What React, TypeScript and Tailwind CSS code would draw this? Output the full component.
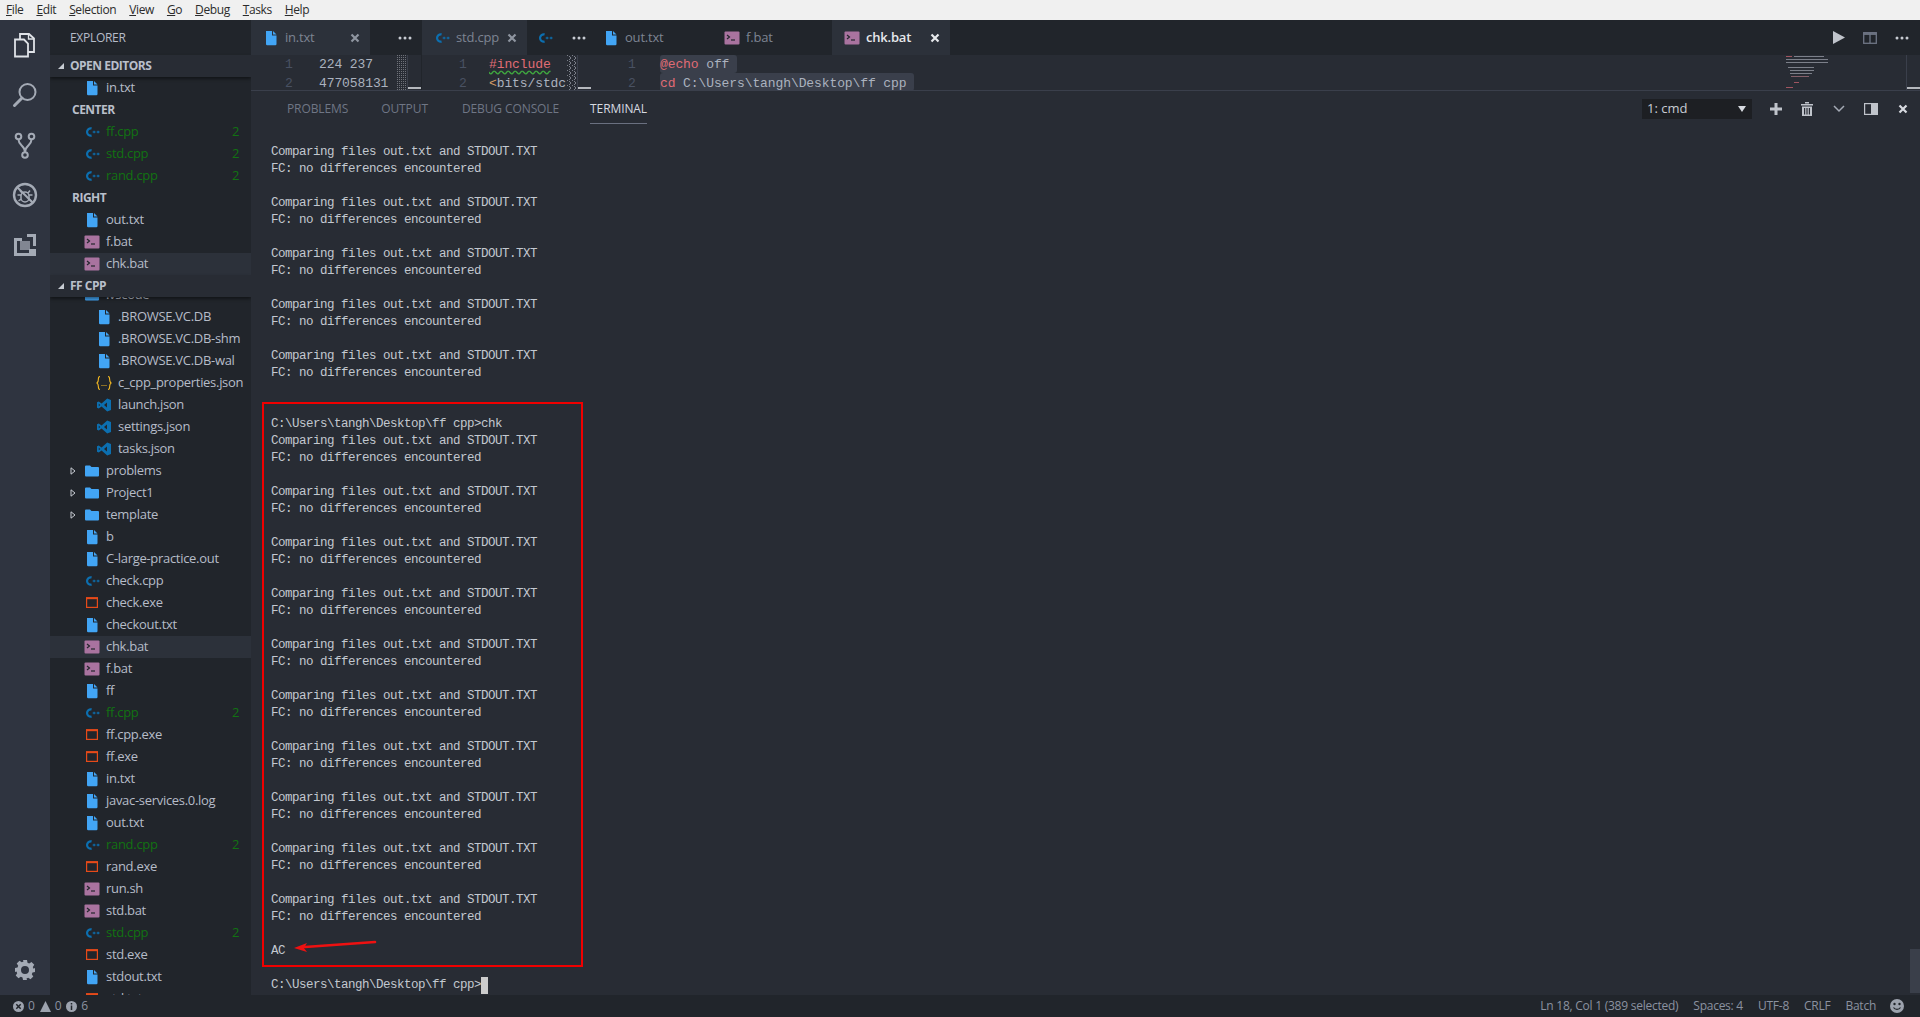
import type { ReactNode } from 'react'

const uiFont = "font-['Open_Sans','Noto_Sans',sans-serif]"
const monoFont = "font-['Liberation_Mono',monospace]"

const FileIcon = () => (
  <svg width="16" height="16" viewBox="0 0 16 16">
    <path d="M3 1h6v4.500h4.500V14a1.200 1.200 0 0 1-1.200 1.200H4.200A1.200 1.200 0 0 1 3 14z" fill="#42a5f5" />
    <path d="M10 1l3.500 3.500H10z" fill="#42a5f5" />
  </svg>
)

const CppIcon = () => (
  <svg width="16" height="16" viewBox="0 0 16 16">
    <path d="M7.600 4.400a3.700 3.700 0 1 0 0 7.200" fill="none" stroke="#0c6fb0" strokeWidth="2.200" />
    <path d="M8.600 8h3M10.100 6.700v2.600M12.600 8h3M14.100 6.700v2.600" stroke="#0c6fb0" strokeWidth="1.200" />
  </svg>
)

const BatIcon = () => (
  <svg width="16" height="16" viewBox="0 0 16 16">
    <rect x="0.500" y="1.500" width="15" height="13" rx="1" fill="#a9739f" />
    <path d="M3 5l2.500 2L3 9" fill="none" stroke="#23262c" strokeWidth="1.200" />
    <path d="M7 10h4" stroke="#23262c" strokeWidth="1.200" />
  </svg>
)

const ExeIcon = () => (
  <svg width="16" height="16" viewBox="0 0 16 16">
    <rect x="2.600" y="3" width="10.800" height="9.400" fill="none" stroke="#e64a19" strokeWidth="1.200" />
    <path d="M2 3.200h12" stroke="#e64a19" strokeWidth="2" />
  </svg>
)

const JsonIcon = () => (
  <svg width="16" height="16" viewBox="0 0 16 16">
    <path d="M4 1.500c-1.600 0-1.600 1-1.600 2.500S2.400 7 1 8c1.400 1 1.400 2.500 1.400 4s0 2.500 1.600 2.500M12 1.500c1.600 0 1.600 1 1.600 2.500s0 3 1.400 4c-1.400 1-1.400 2.500-1.400 4s0 2.500-1.600 2.500" fill="none" stroke="#f5b921" strokeWidth="1.100" />
    <path d="M5.500 10.500h1M7.500 10.500h1M9.500 10.500h1" stroke="#f5b921" strokeWidth="1.200" />
  </svg>
)

const VsIcon = () => (
  <svg width="16" height="16" viewBox="0 0 16 16">
    <path fillRule="evenodd" d="M11.200 1.500L5.600 6.600 2.700 4.400 1 5.300v5.400l1.700.9 2.900-2.200 5.600 5.100 3.800-1.500V3zM11 5.400L8 8l3 2.600zM2.800 6.700L4.200 8 2.800 9.300z" fill="#0c6fb0" />
  </svg>
)

const FolderIcon = () => (
  <svg width="16" height="16" viewBox="0 0 16 16">
    <path d="M1 3.500A1 1 0 0 1 2 2.500h4l1.500 1.500H14a1 1 0 0 1 1 1v7.500a1 1 0 0 1-1 1H2a1 1 0 0 1-1-1z" fill="#42a5f5" />
  </svg>
)

const Dots = () => (
  <svg width="14" height="4" viewBox="0 0 14 4">
    <circle cx="2" cy="2" r="1.500" fill="#c8ccd3" />
    <circle cx="7" cy="2" r="1.500" fill="#c8ccd3" />
    <circle cx="12" cy="2" r="1.500" fill="#c8ccd3" />
  </svg>
)

const CloseIcon = ({ color = '#8f95a0' }: { color?: string }) => (
  <svg width="10" height="10" viewBox="0 0 10 10">
    <path d="M1.500 1.500l7 7M8.500 1.500l-7 7" stroke={color} strokeWidth="2.200" />
  </svg>
)

type Kind = 'file' | 'cpp' | 'bat' | 'exe' | 'json' | 'vs' | 'folder'

const icons: Record<Kind, ReactNode> = {
  file: <FileIcon />,
  cpp: <CppIcon />,
  bat: <BatIcon />,
  exe: <ExeIcon />,
  json: <JsonIcon />,
  vs: <VsIcon />,
  folder: <FolderIcon />,
}

type Row = { name: string; kind: Kind; deep?: boolean; green?: boolean; closed?: boolean; picked?: boolean }

const Item = ({ name, kind, deep, green, closed, picked }: Row) => (
  <div className={`h-[22px] shrink-0 flex items-center relative ${deep ? 'pl-[46px]' : 'pl-[34px]'} ${picked ? 'bg-[#2c313a]' : ''}`}>
    {closed && (
      <svg className="absolute left-[20px] top-[7px]" width="6" height="8" viewBox="0 0 6 8">
        <path d="M1 .8L5 4 1 7.200z" fill="#21252b" stroke="#c8ccd3" strokeWidth="1" />
      </svg>
    )}
    {icons[kind]}
    <span className={`ml-[6px] whitespace-nowrap tracking-[-0.3px] ${green ? 'text-[#127212]' : 'text-[#b6bcc8]'}`}>{name}</span>
    {green && <span className="absolute left-[182px] text-[#127212]">2</span>}
  </div>
)

const SectionHeader = ({ title }: { title: string }) => (
  <div className="h-[22px] shrink-0 relative z-10 flex items-center bg-[#282c34] shadow-[0_2px_3px_rgba(0,0,0,0.45)] pl-[8px] font-bold text-[12px] text-[#b9bfca] tracking-[-0.5px]">
    <svg className="mr-[6px]" width="6" height="6" viewBox="0 0 6 6">
      <path d="M6 0v6H0z" fill="#c8ccd3" />
    </svg>
    {title}
  </div>
)

const GroupLabel = ({ title }: { title: string }) => (
  <div className="h-[22px] shrink-0 flex items-center pl-[22px] font-bold text-[12px] text-[#b9bfca] tracking-[-0.5px]">{title}</div>
)

const openEditors: Row[] = [{ name: 'in.txt', kind: 'file' }]
const centerGroup: Row[] = [
  { name: 'ff.cpp', kind: 'cpp', green: true },
  { name: 'std.cpp', kind: 'cpp', green: true },
  { name: 'rand.cpp', kind: 'cpp', green: true },
]
const rightGroup: Row[] = [
  { name: 'out.txt', kind: 'file' },
  { name: 'f.bat', kind: 'bat' },
  { name: 'chk.bat', kind: 'bat', picked: true },
]
const tree: Row[] = [
  { name: '.vscode', kind: 'folder' },
  { name: '.BROWSE.VC.DB', kind: 'file', deep: true },
  { name: '.BROWSE.VC.DB-shm', kind: 'file', deep: true },
  { name: '.BROWSE.VC.DB-wal', kind: 'file', deep: true },
  { name: 'c_cpp_properties.json', kind: 'json', deep: true },
  { name: 'launch.json', kind: 'vs', deep: true },
  { name: 'settings.json', kind: 'vs', deep: true },
  { name: 'tasks.json', kind: 'vs', deep: true },
  { name: 'problems', kind: 'folder', closed: true },
  { name: 'Project1', kind: 'folder', closed: true },
  { name: 'template', kind: 'folder', closed: true },
  { name: 'b', kind: 'file' },
  { name: 'C-large-practice.out', kind: 'file' },
  { name: 'check.cpp', kind: 'cpp' },
  { name: 'check.exe', kind: 'exe' },
  { name: 'checkout.txt', kind: 'file' },
  { name: 'chk.bat', kind: 'bat', picked: true },
  { name: 'f.bat', kind: 'bat' },
  { name: 'ff', kind: 'file' },
  { name: 'ff.cpp', kind: 'cpp', green: true },
  { name: 'ff.cpp.exe', kind: 'exe' },
  { name: 'ff.exe', kind: 'exe' },
  { name: 'in.txt', kind: 'file' },
  { name: 'javac-services.0.log', kind: 'file' },
  { name: 'out.txt', kind: 'file' },
  { name: 'rand.cpp', kind: 'cpp', green: true },
  { name: 'rand.exe', kind: 'exe' },
  { name: 'run.sh', kind: 'bat' },
  { name: 'std.bat', kind: 'bat' },
  { name: 'std.cpp', kind: 'cpp', green: true },
  { name: 'std.exe', kind: 'exe' },
  { name: 'stdout.txt', kind: 'file' },
  { name: 'std.txt', kind: 'exe' },
]

const menu = ['File', 'Edit', 'Selection', 'View', 'Go', 'Debug', 'Tasks', 'Help']

const ActivityBar = () => (
  <aside className="w-[50px] shrink-0 bg-[#2f3440] flex flex-col items-center pt-[12px]">
    <svg width="24" height="26" viewBox="0 0 24 26" fill="none" stroke="#dfe2e7" strokeWidth="1.800">
      <path d="M2 7.500h9l4 4v13H2z" />
      <path d="M7 7V2h9l5 4.500V20h-6" />
      <path d="M15.500 2.500V7H21" strokeWidth="1.300" />
    </svg>
    <svg className="mt-[24px]" width="26" height="26" viewBox="0 0 26 26" fill="none" stroke="#a4aab5">
      <circle cx="15.500" cy="10" r="8" strokeWidth="2" />
      <path d="M10 16L2.500 23.500" strokeWidth="3" strokeLinecap="round" />
    </svg>
    <svg className="mt-[24px]" width="22" height="28" viewBox="0 0 22 28" fill="none" stroke="#a4aab5" strokeWidth="2">
      <circle cx="4.500" cy="4.500" r="2.800" />
      <circle cx="17.500" cy="4.500" r="2.800" />
      <circle cx="11" cy="23" r="2.800" />
      <path d="M4.500 7.500c0 6 6.500 6 6.500 12.500M17.500 7.500c0 6-6.500 6-6.500 12.500" />
    </svg>
    <svg className="mt-[22px]" width="26" height="26" viewBox="0 0 26 26" fill="none" stroke="#a4aab5">
      <circle cx="13" cy="13" r="11" strokeWidth="2.400" />
      <path d="M5.500 5.500l15 15" strokeWidth="2" />
      <path d="M9 14a4 4 0 0 1 8 0v2a4 4 0 0 1-8 0zM5.500 13H9M17 13h3.500M6.500 19L9 17M19.500 19L17 17M8 8.500l2 2.500M18 8.500l-2 2.500" strokeWidth="1.500" />
    </svg>
    <svg className="mt-[26px]" width="22" height="22" viewBox="0 0 22 22">
      <path d="M0 4h8v3H3v12h12v-4h7v7H0zM13 0h9v12h-3V3h-6z" fill="#a4aab5" />
      <rect x="6" y="7" width="10" height="9" fill="#a4aab5" opacity="0.7" />
    </svg>
    <svg className="mt-auto mb-[15px]" width="20" height="20" viewBox="0 0 20 20">
      <path fill="#a4aab5" fillRule="evenodd" d="M8 0h4l.5 2.700 1.700.7L16.500 1.900l2.800 2.800-1.500 2.300.7 1.700L20 8.000v4l-2.500.5-.7 1.700 1.500 2.300-2.800 2.800-2.300-1.500-1.700.7L12 20H8l-.5-2.500-1.700-.7-2.300 1.500-2.800-2.800 1.500-2.300-.7-1.700L0 12V8l2.500-.5.7-1.700-1.500-2.300 2.800-2.800 2.300 1.500 1.700-.7zM10 6a4 4 0 1 0 0 8 4 4 0 0 0 0-8z" />
    </svg>
  </aside>
)

const Sidebar = () => (
  <aside className={`w-[201px] shrink-0 bg-[#21252b] flex flex-col text-[13px] overflow-hidden ${uiFont}`}>
    <div className="h-[35px] shrink-0 flex items-center pl-[20px] text-[12px] text-[#b6bcc8] tracking-[-0.3px]">EXPLORER</div>
    <SectionHeader title="OPEN EDITORS" />
    {openEditors.map(r => <Item key={r.name} {...r} />)}
    <GroupLabel title="CENTER" />
    {centerGroup.map(r => <Item key={r.name} {...r} />)}
    <GroupLabel title="RIGHT" />
    {rightGroup.map(r => <Item key={r.name} {...r} />)}
    <SectionHeader title="FF CPP" />
    <div className="flex-1 min-h-0 overflow-hidden">
      <div className="-mt-[13px] flex flex-col">
        {tree.map(r => <Item key={r.name + r.kind} {...r} />)}
      </div>
    </div>
  </aside>
)

type TabProps = { label: string; kind: Kind; width: string; lit?: boolean; active?: boolean; close?: boolean }

const Tab = ({ label, kind, width, lit, active, close }: TabProps) => (
  <div className={`${width} h-full shrink-0 flex items-center pl-[12px] pr-[10px] ${lit ? 'bg-[#2c313a]' : ''}`}>
    {icons[kind]}
    <span className={`ml-[6px] pt-[1px] text-[13px] tracking-[-0.2px] ${active ? 'text-[#e6e8eb] font-semibold' : 'text-[#7d8492]'}`}>{label}</span>
    {close && <span className="ml-auto flex"><CloseIcon color={active ? '#e6e8eb' : '#8f95a0'} /></span>}
  </div>
)

// grey speckle for the minimaps, fixed so each render gives the same picture
const noise = (w: number, rows: number, every: number, fill: string) => {
  const cells: ReactNode[] = []
  for (let r = 0; r < rows; r++) {
    for (let c = 0; c < w; c++) {
      if ((r * r * 3 + c * 11 + r * c * 5) % every === 0) cells.push(<rect key={`${r}-${c}`} x={c} y={r} width="1" height="1" fill={fill} />)
    }
  }
  return cells
}

const Pane = ({ width, nums, children, map, thumb = true }: { width: string; nums: string; children: ReactNode; map?: ReactNode; thumb?: boolean }) => (
  <div className={`${width} shrink-0 h-full relative overflow-hidden ${monoFont} text-[13px] leading-[19px] tracking-[-0.1px]`}>
    <div className={`absolute top-0 ${nums} text-[#495162]`}>
      <div>1</div>
      <div>2</div>
    </div>
    {children}
    {map}
    {thumb && <div className="absolute right-0 top-0 bottom-0 w-[14px] border-l border-[#3a3f4b]"><div className="absolute left-0 right-0 bottom-[1px] h-[2px] bg-[#b5b8bd]" /></div>}
  </div>
)

const Editors = () => (
  <div className="h-[35px] shrink-0 flex bg-[#282c34]">
    <Pane width="w-[170px]" nums="left-[34px]" map={<svg className="absolute left-[146px] top-0" width="10" height="35">{noise(10, 35, 2, '#6f727a')}</svg>}>
      <div className="absolute top-0 left-[68px] text-[#abb2bf] whitespace-pre">
        <div>224 237</div>
        <div>477058131</div>
      </div>
    </Pane>
    <div className="w-[1px] shrink-0 bg-[#21252b]" />
    <Pane width="w-[169px]" nums="left-[37px]" map={<svg className="absolute left-[145px] top-0" width="10" height="35">{noise(10, 35, 5, '#7c808a')}</svg>}>
      <div className="absolute top-0 left-[67px] whitespace-pre">
        <div className="text-[#e06c75] w-fit underline decoration-wavy decoration-[#3fa83f] underline-offset-2">#include</div>
        <div className="text-[#d19a66]">&lt;<span className="text-[#abb2bf]">bits/stdc</span></div>
      </div>
    </Pane>
    <Pane
      width="flex-1"
      nums="left-[37px]"
      map={
        <svg className="absolute right-[90px] top-0" width="44" height="35">
          <rect x="0" y="1" width="6" height="1" fill="#a05560" />
          <rect x="8" y="1" width="30" height="1" fill="#7c808a" />
          <rect x="0" y="4" width="42" height="1" fill="#7c808a" />
          <rect x="0" y="7" width="42" height="1" fill="#7c808a" />
          <rect x="2" y="12" width="26" height="1" fill="#7c808a" />
          <rect x="4" y="15" width="24" height="1" fill="#7c808a" />
          <rect x="4" y="18" width="22" height="1" fill="#7c808a" />
          <rect x="5" y="21" width="18" height="1" fill="#85606a" />
          <rect x="8" y="27" width="5" height="1" fill="#a05560" />
          <rect x="0" y="32" width="7" height="1" fill="#a05560" />
        </svg>
      }
    >
      <div className="absolute top-0 left-[69px] w-[77px] h-[18px] bg-[#3a3f4b] rounded-[3px]" />
      <div className="absolute top-[18px] left-[69px] w-[254px] h-[18px] bg-[#3a3f4b] rounded-[3px]" />
      <div className="absolute top-0 left-[69px] text-[#abb2bf] whitespace-pre">
        <div><span className="text-[#e06c75]">@echo</span> off</div>
        <div><span className="text-[#e06c75]">cd</span> C:\Users\tangh\Desktop\ff cpp</div>
      </div>
    </Pane>
  </div>
)

const PanelTab = ({ label, active, className }: { label: string; active?: boolean; className: string }) => (
  <div className={`${className} h-[33px] pt-[3px] flex items-center text-[12px] tracking-[-0.1px] border-b ${active ? 'text-[#d7dae0] border-[#6a7080]' : 'text-[#6f7685] border-transparent'}`}>{label}</div>
)

const ToolIcon = ({ children, width }: { children: ReactNode; width: string }) => (
  <div className={`${width} shrink-0 flex justify-center`}>{children}</div>
)

const PanelHeader = () => (
  <div className={`h-[34px] shrink-0 flex items-start ${uiFont}`}>
    <PanelTab label="PROBLEMS" className="ml-[36px]" />
    <PanelTab label="OUTPUT" className="ml-[33px]" />
    <PanelTab label="DEBUG CONSOLE" className="ml-[34px]" />
    <PanelTab label="TERMINAL" active className="ml-[31px]" />
    <div className="ml-auto mt-[8px] w-[110px] h-[20px] bg-[#1d1f23] text-[#c8ccd3] text-[13px] flex items-center pl-[5px] pr-[6px]">
      1: cmd
      <svg className="ml-auto" width="8" height="6" viewBox="0 0 8 6"><path d="M0 0h8L4 6z" fill="#d7dae0" /></svg>
    </div>
    <div className="flex items-center h-[36px] ml-[8px] mr-[2px]">
      <ToolIcon width="w-[31px]">
        <svg width="12" height="12" viewBox="0 0 12 12"><path d="M4.500 0h3v4.500H12v3H7.500V12h-3V7.500H0v-3h4.500z" fill="#c0c4cb" /></svg>
      </ToolIcon>
      <ToolIcon width="w-[32px]">
        <svg width="12" height="14" viewBox="0 0 12 14" fill="#c0c4cb"><path d="M0 2h12v1.500H0zM4 0h4v1.500H4zM1 4.500h10V14H1zM3 6v6.500h1.200V6zM5.400 6v6.500h1.200V6zM7.800 6v6.500H9V6z" fillRule="evenodd" /></svg>
      </ToolIcon>
      <ToolIcon width="w-[32px]">
        <svg width="12" height="8" viewBox="0 0 12 8"><path d="M1 1l5 5 5-5" fill="none" stroke="#a4aab5" strokeWidth="1.500" /></svg>
      </ToolIcon>
      <ToolIcon width="w-[32px]">
        <svg width="14" height="12" viewBox="0 0 14 12"><rect x=".6" y=".6" width="12.800" height="10.800" fill="none" stroke="#c0c4cb" strokeWidth="1.200" /><rect x="7" y="1" width="6.500" height="10" fill="#c0c4cb" /></svg>
      </ToolIcon>
      <ToolIcon width="w-[31px]"><CloseIcon color="#d7dae0" /></ToolIcon>
    </div>
  </div>
)

const Comparing = () => (
  <>
    <div>Comparing files out.txt and STDOUT.TXT</div>
    <div>FC: no differences encountered</div>
    <div>&nbsp;</div>
  </>
)

const Terminal = () => (
  <div className={`flex-1 min-h-0 relative overflow-hidden pt-[19px] pl-[20px] ${monoFont} text-[12.500px] leading-[17px] tracking-[-0.5px] text-[#c3c8d0]`}>
    {[0, 1, 2, 3, 4].map(i => <Comparing key={i} />)}
    <div>&nbsp;</div>
    <div>C:\Users\tangh\Desktop\ff cpp&gt;chk</div>
    {[0, 1, 2, 3, 4, 5, 6, 7, 8, 9].map(i => <Comparing key={i} />)}
    <div>AC</div>
    <div>&nbsp;</div>
    <div className="flex">C:\Users\tangh\Desktop\ff cpp&gt;<span className="inline-block w-[7px] h-[17px] bg-[#cccccc]" /></div>

    <div className="absolute left-[11px] top-[277px] w-[321px] h-[565px] border-2 border-[#f00000]" />
    <svg className="absolute left-[40px] top-[814px]" width="88" height="16" viewBox="0 0 88 16">
      <path d="M84 3L14 8" stroke="#ee1111" strokeWidth="2.600" strokeLinecap="round" />
      <path d="M3 9l13-5-3 5 3 4z" fill="#ee1111" />
    </svg>
    <div className="absolute right-0 bottom-[2px] w-[10px] h-[44px] bg-[#3a3f4a]" />
  </div>
)

const Smile = () => (
  <svg width="14" height="14" viewBox="0 0 14 14">
    <circle cx="7" cy="7" r="7" fill="#9da3ae" />
    <circle cx="4.500" cy="5" r="1.200" fill="#21252b" />
    <circle cx="9.500" cy="5" r="1.200" fill="#21252b" />
    <path d="M3.500 8.500c1.500 2.500 5.500 2.500 7 0" fill="none" stroke="#21252b" strokeWidth="1.200" />
  </svg>
)

const StatusBar = () => (
  <footer className={`h-[22px] shrink-0 bg-[#21252b] flex items-center text-[12px] text-[#8b92a0] tracking-[-0.25px] ${uiFont}`}>
    <div className="flex items-center pl-[13px]">
      <svg width="11" height="11" viewBox="0 0 11 11"><circle cx="5.500" cy="5.500" r="5.500" fill="#9da3ae" /><path d="M3.300 3.300l4.400 4.400M7.700 3.300L3.300 7.700" stroke="#21252b" strokeWidth="1.500" /></svg>
      <span className="ml-[4px]">0</span>
      <svg className="ml-[5px]" width="11" height="11" viewBox="0 0 11 11"><path d="M5.500 0L11 11H0z" fill="#9da3ae" /></svg>
      <span className="ml-[4px]">0</span>
      <svg className="ml-[5px]" width="11" height="11" viewBox="0 0 11 11"><circle cx="5.500" cy="5.500" r="5.500" fill="#9da3ae" /><path d="M5.500 4.500V9M5.500 2v1.400" stroke="#21252b" strokeWidth="1.500" /></svg>
      <span className="ml-[4px]">6</span>
    </div>
    <div className="ml-auto flex items-center gap-[15px] pr-[16px]">
      <span>Ln 18, Col 1 (389 selected)</span>
      <span>Spaces: 4</span>
      <span>UTF-8</span>
      <span>CRLF</span>
      <span>Batch</span>
      <span className="-ml-[1px]"><Smile /></span>
    </div>
  </footer>
)

export default function App() {
  return (
    <div className="w-full h-screen flex flex-col overflow-hidden bg-[#282c34]">
      <nav className={`h-[20px] shrink-0 bg-[#f0f0f0] flex items-center pl-[6px] gap-[13px] text-[12px] text-[#2b2b2b] tracking-[-0.4px] ${uiFont}`}>
        {menu.map(m => (
          <span key={m}><span className="underline">{m[0]}</span>{m.slice(1)}</span>
        ))}
      </nav>
      <div className="flex-1 min-h-0 flex">
        <ActivityBar />
        <Sidebar />
        <main className={`flex-1 min-w-0 flex flex-col ${uiFont}`}>
          <div className="h-[35px] shrink-0 flex items-center bg-[#21252b]">
            <Tab label="in.txt" kind="file" width="w-[119px]" lit close />
            <div className="w-[52px] shrink-0 flex justify-end pr-[10px]"><Dots /></div>
            <Tab label="std.cpp" kind="cpp" width="w-[105px]" lit close />
            <div className="w-[64px] h-full shrink-0 flex items-center pl-[10px]"><CppIcon /><span className="ml-[19px] flex"><Dots /></span></div>
            <Tab label="out.txt" kind="file" width="w-[121px]" />
            <Tab label="f.bat" kind="bat" width="w-[120px]" />
            <Tab label="chk.bat" kind="bat" width="w-[118px]" lit active close />
            <div className="ml-auto flex items-center pr-[11px]">
              <svg width="12" height="13" viewBox="0 0 12 13"><path d="M0 0l12 6.500L0 13z" fill="#c0c4cb" /></svg>
              <svg className="ml-[18px]" width="14" height="12" viewBox="0 0 14 12" fill="none" stroke="#6f7685" strokeWidth="1.300"><rect x=".7" y=".7" width="12.600" height="10.600" /><path d="M7 1v10" /><path d="M1 2h12" strokeWidth="1.800" /></svg>
              <span className="ml-[18px] flex"><Dots /></span>
            </div>
          </div>
          <Editors />
          <section className="flex-1 min-h-0 flex flex-col border-t border-[#3a3f4b]">
            <PanelHeader />
            <Terminal />
          </section>
        </main>
      </div>
      <StatusBar />
    </div>
  )
}
